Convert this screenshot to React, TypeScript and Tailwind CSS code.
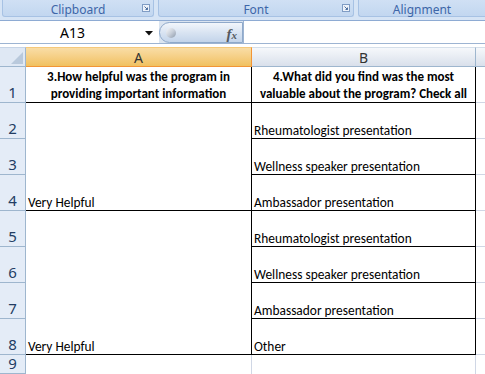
import React from "react";

const cellFont = { fontFamily: "Carlito, Lato, 'Noto Sans', sans-serif" };

function Launcher() {
  return (
    <svg width="8" height="8" viewBox="0 0 8 8" className="shrink-0">
      <rect x="0.5" y="0.5" width="7" height="7" fill="#eef3fa" stroke="#7f9cc4" />
      <path d="M2.5 2.5 L5.5 5.5 M3.5 5.5 H5.5 V3.5" stroke="#4d6f9f" strokeWidth="1" fill="none" />
    </svg>
  );
}

function Group({ label, className, launcher = true }: { label: string; className: string; launcher?: boolean }) {
  return (
    <div
      className={`relative h-[17px] rounded-b-[3px] border border-t-0 border-[#a7c2e4] bg-gradient-to-b from-[#d0e0f4] to-[#c2d7f0] flex items-center ${className}`}
    >
      <div className="flex-1 pt-[3px] text-center text-[12px] leading-none text-[#3d66a8]" style={{ fontFamily: "'Noto Sans', sans-serif" }}>
        {label}
      </div>
      {launcher && <div className="absolute right-[3px] top-[4px]"><Launcher /></div>}
    </div>
  );
}

type Row = { n: number };

export default function App() {
  const rows: Row[] = [1, 2, 3, 4, 5, 6, 7, 8, 9].map((n) => ({ n }));
  const bItems: Record<number, string> = {
    2: "Rheumatologist presentation",
    3: "Wellness speaker presentation",
    4: "Ambassador presentation",
    5: "Rheumatologist presentation",
    6: "Wellness speaker presentation",
    7: "Ambassador presentation",
    8: "Other",
  };

  return (
    <div className="w-[485px] h-[374px] overflow-hidden bg-white flex flex-col">
      {/* Ribbon group labels */}
      <div className="h-[21px] bg-[#d6e4f5] border-b border-[#8eabd3] flex gap-[4px] pl-[2px] shrink-0">
        <Group label="Clipboard" className="w-[152px]" />
        <Group label="Font" className="w-[196px]" />
        <Group label="Alignment" className="flex-1 rounded-br-none border-r-0" launcher={false} />
      </div>
      {/* Formula bar */}
      <div className="h-[23px] flex bg-[#dbe5f1] border-b border-[#9db4d2] shrink-0">
        <div className="w-[158px] h-full bg-white flex items-center relative">
          <div className="w-[145px] text-center text-[14px] text-black" style={{ fontFamily: "'Noto Sans', sans-serif" }}>A13</div>
          <svg className="absolute left-[145px] top-[10px]" width="8" height="5" viewBox="0 0 8 5">
            <path d="M0 0 H8 L4 4.5 Z" fill="#111" />
          </svg>
        </div>
        <div className="w-[1px] bg-white" />
        <div className="w-[84px] h-[21px] mt-[1px] flex items-center rounded-l-[11px] bg-gradient-to-b from-[#f2f6fb] via-[#d9e4f2] to-[#c3d4ea] border border-[#8fa9ca] relative">
          <div className="ml-[6px] w-[10px] h-[10px] rounded-full bg-gradient-to-br from-[#f7f8fa] via-[#c9d0da] to-[#8d9aab]" />
          <div className="absolute right-[5px] top-[0px] text-[15px] italic font-bold text-[#55595f]" style={{ fontFamily: "'Liberation Serif', serif" }}>
            f<span className="text-[11px]">x</span>
          </div>
        </div>
        <div className="flex-1 h-full bg-white border-l border-[#9db4d2]" />
      </div>
      <div className="h-[3px] bg-white shrink-0" />
      {/* Grid */}
      <div className="flex flex-col" style={cellFont}>
        {/* Column header */}
        <div className="h-[20px] flex shrink-0">
          <div className="w-[26px] h-full bg-[#dfe8f4] border-r border-b border-[#9eb6ce] relative border-t border-t-[#c6d4e6]">
            <svg className="absolute right-[2px] bottom-[2px]" width="12" height="12" viewBox="0 0 12 12">
              <path d="M12 0 V12 H0 Z" fill="#b9c9dc" />
            </svg>
          </div>
          <div className="w-[226px] h-full bg-gradient-to-b from-[#f9dda6] to-[#f1c15f] border-r border-b border-[#f29536] border-t border-t-[#f5c97b] flex items-center justify-center text-[14px] text-[#333]" style={{ fontFamily: "'Noto Sans', sans-serif" }}>
            A
          </div>
          <div className="w-[224px] h-full bg-gradient-to-b from-[#f6f8fb] to-[#d9e0eb] border-r border-b border-[#9eb6ce] border-t border-t-[#d5dfea] flex items-center justify-center text-[14px] text-[#333]" style={{ fontFamily: "'Noto Sans', sans-serif" }}>
            B
          </div>
          <div className="flex-1 h-full bg-gradient-to-b from-[#f6f8fb] to-[#d9e0eb] border-b border-[#9eb6ce] border-t border-t-[#d5dfea]" />
        </div>
        {/* Body */}
        <div className="grid grid-cols-[26px_226px_224px_1fr] grid-rows-[36px_36px_36px_36px_36px_36px_36px_36px_19px]">
          {rows.map((r, i) => (
            <div
              key={`h${r.n}`}
              className="bg-[#e4ecf7] border-r border-b border-[#9eb6ce] flex items-end justify-center pb-[1px] text-[15px] text-[#233d63] leading-[17px]"
              style={{ gridColumn: 1, gridRow: i + 1, fontFamily: "'Noto Sans', sans-serif" }}
            >
              {r.n}
            </div>
          ))}
          {/* A1 */}
          <div
            className="border-r border-b border-black flex items-end justify-center text-center font-bold text-[13px] leading-[17px] pb-0 text-black"
            style={{ gridColumn: 2, gridRow: 1 }}
          >
            3.How helpful was the program in
            <br />
            providing important information
          </div>
          <div
            className="border-r border-b border-black flex items-end justify-center text-center font-bold text-[13px] leading-[17px] pb-0 text-black"
            style={{ gridColumn: 3, gridRow: 1 }}
          >
            4.What did you find was the most
            <br />
            valuable about the program? Check all
          </div>
          <div className="border-b border-[#d0d7e5]" style={{ gridColumn: 4, gridRow: 1 }} />
          {/* A merged */}
          <div className="border-r border-b border-black flex items-end pl-[2px] pb-0 text-[13.4px] leading-[15px] text-black" style={{ gridColumn: 2, gridRow: "2 / 5" }}>
            Very Helpful
          </div>
          <div className="border-r border-b border-black flex items-end pl-[2px] pb-0 text-[13.4px] leading-[15px] text-black" style={{ gridColumn: 2, gridRow: "5 / 9" }}>
            Very Helpful
          </div>
          {[2, 3, 4, 5, 6, 7, 8].map((n) => (
            <React.Fragment key={`b${n}`}>
              <div
                className="border-r border-b border-black flex items-end pl-[2px] pb-0 text-[13.4px] leading-[15px] text-black"
                style={{ gridColumn: 3, gridRow: n }}
              >
                {bItems[n]}
              </div>
              <div className="border-b border-[#d0d7e5]" style={{ gridColumn: 4, gridRow: n }} />
            </React.Fragment>
          ))}
          <div className="border-r border-[#d0d7e5]" style={{ gridColumn: 2, gridRow: 9 }} />
          <div className="border-r border-[#d0d7e5]" style={{ gridColumn: 3, gridRow: 9 }} />
        </div>
      </div>
    </div>
  );
}
